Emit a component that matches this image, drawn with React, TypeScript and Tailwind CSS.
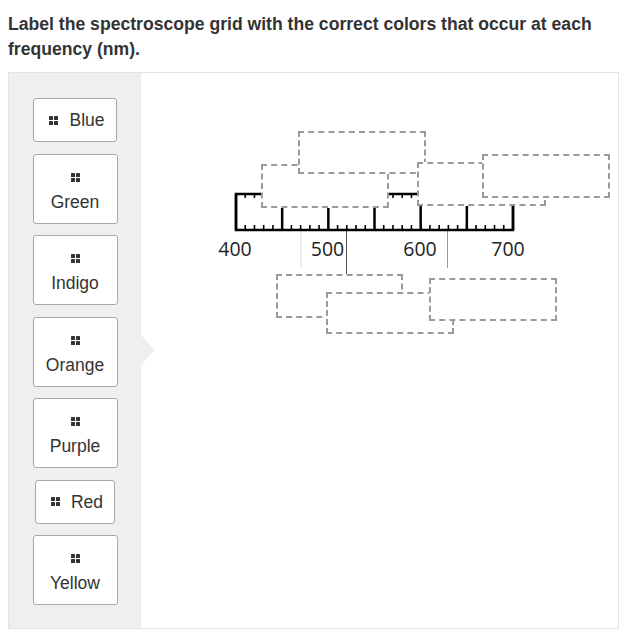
import React from 'react';

type Chip = { label: string; stacked: boolean };

const chips: Chip[] = [
    { label: 'Blue', stacked: false },
    { label: 'Green', stacked: true },
    { label: 'Indigo', stacked: true },
    { label: 'Orange', stacked: true },
    { label: 'Purple', stacked: true },
    { label: 'Red', stacked: false },
    { label: 'Yellow', stacked: true },
];

const zones = [
    { x: 120, y: 91, w: 128, h: 44 },
    { x: 157, y: 58, w: 128, h: 43 },
    { x: 276, y: 89, w: 129, h: 44 },
    { x: 341, y: 81, w: 128, h: 44 },
    { x: 135, y: 201, w: 127, h: 44 },
    { x: 185, y: 219, w: 128, h: 42 },
    { x: 288, y: 205, w: 128, h: 43 },
];

const Grip: React.FC = () => (
    <svg width="9" height="9" viewBox="0 0 9 9" className="shrink-0">
        <rect x="0" y="0" width="4" height="4" rx="0.5" fill="#333" />
        <rect x="5" y="0" width="4" height="4" rx="0.5" fill="#333" />
        <rect x="0" y="5" width="4" height="4" rx="0.5" fill="#333" />
        <rect x="5" y="5" width="4" height="4" rx="0.5" fill="#333" />
    </svg>
);

const ChipButton: React.FC<{ chip: Chip }> = ({ chip }) => {
    if (chip.stacked) {
        return (
            <div className="w-[85px] h-[70px] bg-white border border-[#a8a8a8] rounded-[3px] flex flex-col items-center pt-[18px] gap-[10px] text-[17.5px] leading-[20px] text-[#333]">
                <Grip />
                <span>{chip.label}</span>
            </div>
        );
    }
    return (
        <div className="h-[44px] bg-white border border-[#a8a8a8] rounded-[3px] flex items-center pl-[15px] pr-[11px] gap-[11px] text-[17.5px] leading-[20px] text-[#333]">
            <Grip />
            <span>{chip.label}</span>
        </div>
    );
};

const Ruler: React.FC = () => {
    const x0 = 236;
    const x1 = 513;
    const top = 194;
    const bottom = 230;
    const step = (x1 - x0) / 6;
    const majors = Array.from({ length: 7 }, (_, i) => x0 + i * step);
    const minors = Array.from({ length: 31 }, (_, i) => x0 + i * (step / 5)).filter((_, i) => i % 5 !== 0);

    return (
        <svg className="absolute left-0 top-0" width="477" height="555">
            <g transform="translate(-141 -73)">
                <line x1="301" y1="231" x2="301" y2="268" stroke="#dcdcdc" strokeWidth="1" />
                <line x1="346.5" y1="231" x2="346.5" y2="274" stroke="#555" strokeWidth="1" />
                <line x1="447.5" y1="231" x2="447.5" y2="268" stroke="#999" strokeWidth="1" />

                <path d={`M${x0} ${top} V${bottom} H${x1} V${top} Z`} fill="none" stroke="#000" strokeWidth="2.5" />
                {majors.map(x => (
                    <line key={'M' + x} x1={x} y1={top} x2={x} y2={bottom} stroke="#000" strokeWidth="2.5" />
                ))}
                {minors.map(x => (
                    <line key={'b' + x} x1={x} y1={bottom - 5} x2={x} y2={bottom} stroke="#000" strokeWidth="1.6" />
                ))}
                {minors.map(x => (
                    <line key={'t' + x} x1={x} y1={top} x2={x} y2={top + 4} stroke="#000" strokeWidth="1.6" />
                ))}

                <g fontFamily="'Open Sans', sans-serif" fontSize="19.5" fill="#222" textAnchor="middle">
                    <text x="235" y="255.5">400</text>
                    <text x="327.5" y="255.5">500</text>
                    <text x="420" y="255.5">600</text>
                    <text x="508" y="255.5">700</text>
                </g>
            </g>
        </svg>
    );
};

const App: React.FC = () => {
    return (
        <div className="min-h-screen bg-white pt-[12px] px-[8px]" style={{ fontFamily: "'Liberation Sans', Arial, sans-serif" }}>
            <h2 className="text-[17.6px] leading-[25px] font-bold text-[#333] mb-[10px] w-[605px]">
                Label the spectroscope grid with the correct colors that occur at each frequency (nm).
            </h2>

            <div className="w-[611px] h-[557px] border border-[#e3e3e3] flex">
                <div className="relative w-[132px] shrink-0 bg-[#efefef] flex flex-col items-center pt-[25px] gap-[11.5px]">
                    {chips.map(c => (
                        <ChipButton key={c.label} chip={c} />
                    ))}
                    <div className="absolute left-full top-[262px] w-0 h-0 border-y-[15px] border-y-transparent border-l-[14px] border-l-[#efefef]" />
                </div>

                <div className="relative flex-1">
                    <Ruler />
                    {zones.map((z, i) => (
                        <div
                            key={i}
                            className="absolute bg-white border-2 border-dashed border-[#9a9a9a]"
                            style={{ left: z.x, top: z.y, width: z.w, height: z.h }}
                        />
                    ))}
                </div>
            </div>
        </div>
    );
};

export default App;
